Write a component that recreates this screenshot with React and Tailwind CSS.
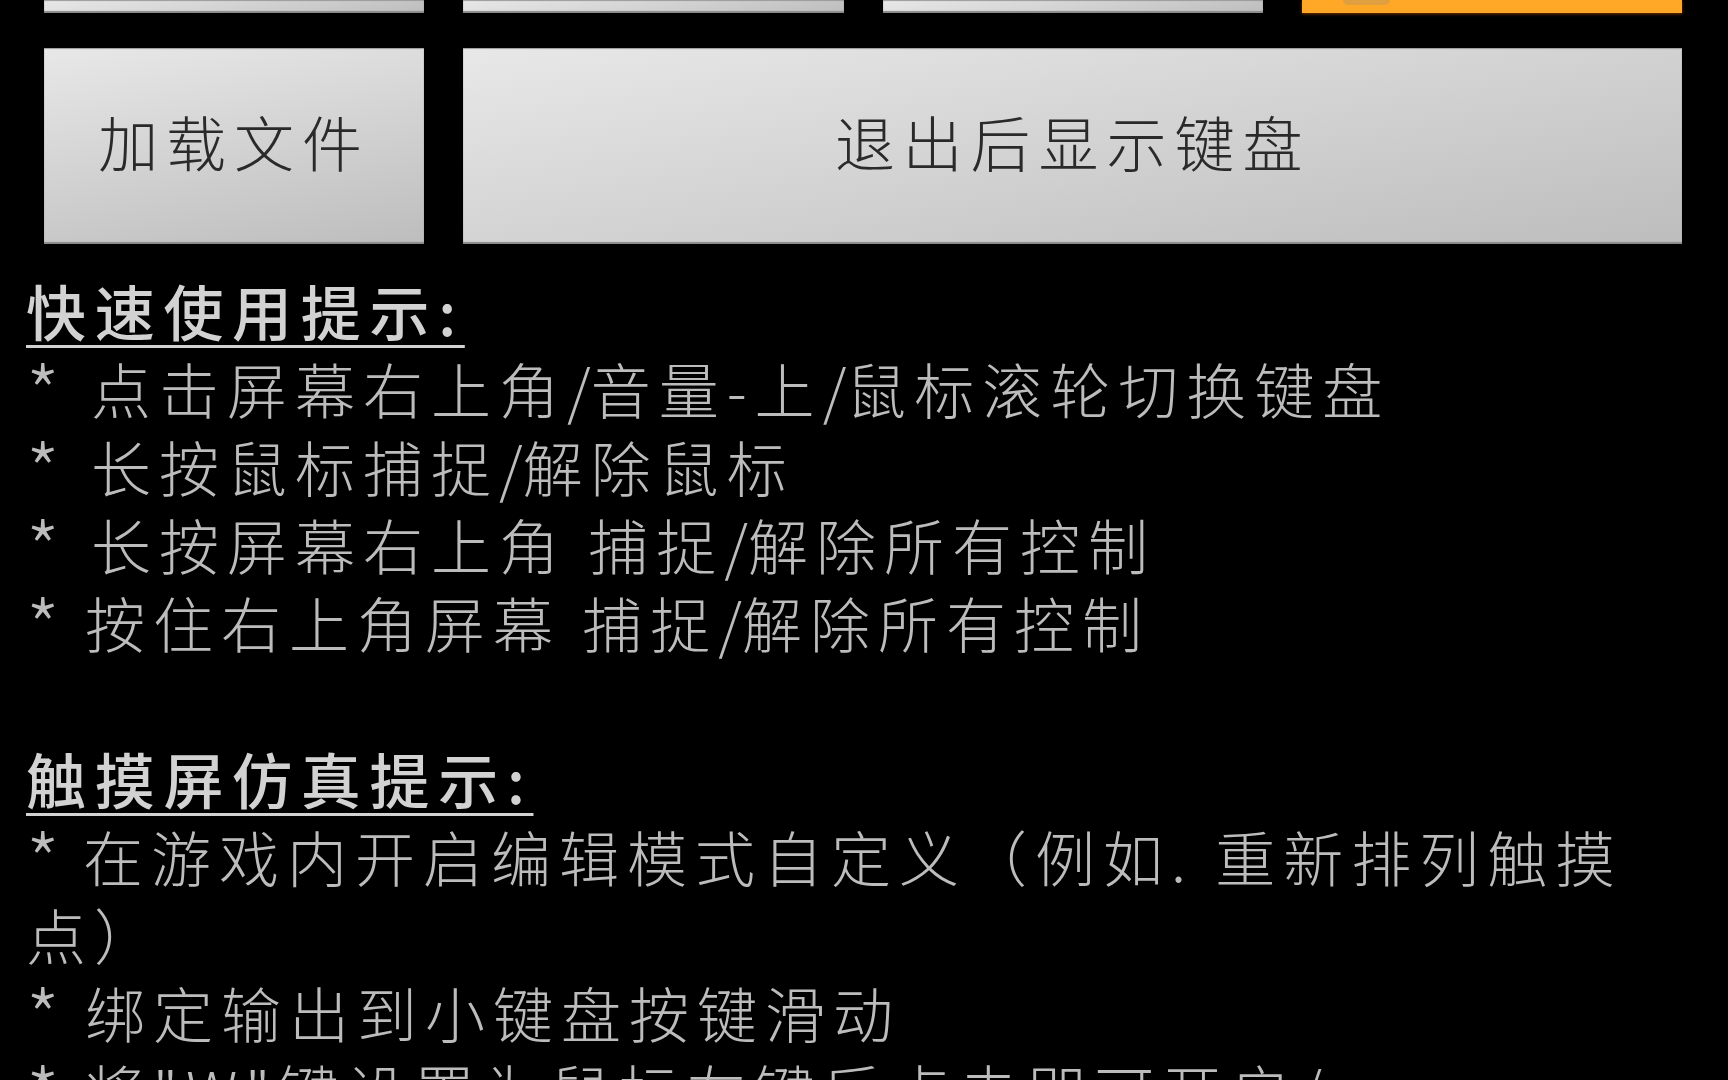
const quickTips = [
  { lead: "w-[65px]", parts: ["点击屏幕右上角", "/", "音量-上", "/", "鼠标滚轮切换键盘"] },
  { lead: "w-[65px]", parts: ["长按鼠标捕捉", "/", "解除鼠标"] },
  { lead: "w-[65px]", parts: ["长按屏幕右上角 捕捉", "/", "解除所有控制"] },
  { lead: "w-[59px]", parts: ["按住右上角屏幕 捕捉", "/", "解除所有控制"] },
];

const touchTips = [
  { lead: "w-[57px]", parts: ["在游戏内开启编辑模式自定义（例如. 重新排列触摸点）"] },
  { lead: "w-[59px]", parts: ["绑定输出到小键盘按键滑动"] },
  { lead: "w-[59px]", parts: ['将"W"键设置为鼠标左键后点击即可开启', "/"] },
];

const btn =
  "bg-[linear-gradient(170deg,#e8e8e8,#bdbdbd)] shadow-[inset_0_-2px_1px_#8a8a8a,inset_0_1px_1px_#9a9a9a]";

function Heading({ children }) {
  return (
    <p className="text-[#d2d2d2] font-medium tracking-[8.7px] underline decoration-[3px] underline-offset-[9px] [text-decoration-skip-ink:none]">
      {children}
    </p>
  );
}

function Tip({ lead, parts }) {
  return (
    <p className="text-[#bcbcbc] font-light whitespace-pre-wrap">
      <span className={`inline-block ${lead} text-[76px] leading-[0px] tracking-normal align-[-9px]`}>*</span>
      {parts.map((part, i) =>
        part === "/" ? (
          <span key={i} className="tracking-normal">/</span>
        ) : (
          <span key={i}>{part}</span>
        )
      )}
    </p>
  );
}

export default function App() {
  return (
    <div className="h-screen overflow-hidden bg-black font-['Noto_Sans_CJK_SC','Noto_Sans',sans-serif] text-[60px] leading-[78px] tracking-[8px]">
      <div className="grid grid-cols-4 gap-x-[39px] gap-y-[35px] pl-[44px] pr-[46px] blur-[0.5px]">
        <div className={`h-[13px] ${btn}`}></div>
        <div className={`h-[13px] ${btn}`}></div>
        <div className={`h-[13px] ${btn}`}></div>
        <div className="h-[13px] pl-[41px] bg-[#ffa726] shadow-[0_1px_3px_#7a3500]">
          <div className="h-[5px] w-[47px] bg-[#e0a040] rounded-b-full"></div>
        </div>
        <button className={`h-[196px] pb-[11px] text-[#2a2a2a] font-light ${btn}`}>加载文件</button>
        <button className={`col-span-3 h-[196px] pb-[11px] text-[#2a2a2a] font-light ${btn}`}>退出后显示键盘</button>
      </div>

      <div className="pt-[27px] pl-[26px] pr-[46px] blur-[0.5px]">
        <Heading>快速使用提示:</Heading>
        {quickTips.map((t, i) => (
          <Tip key={i} lead={t.lead} parts={t.parts} />
        ))}
        <div className="h-[78px]"></div>
        <Heading>触摸屏仿真提示:</Heading>
        {touchTips.map((t, i) => (
          <Tip key={i} lead={t.lead} parts={t.parts} />
        ))}
      </div>
    </div>
  );
}
